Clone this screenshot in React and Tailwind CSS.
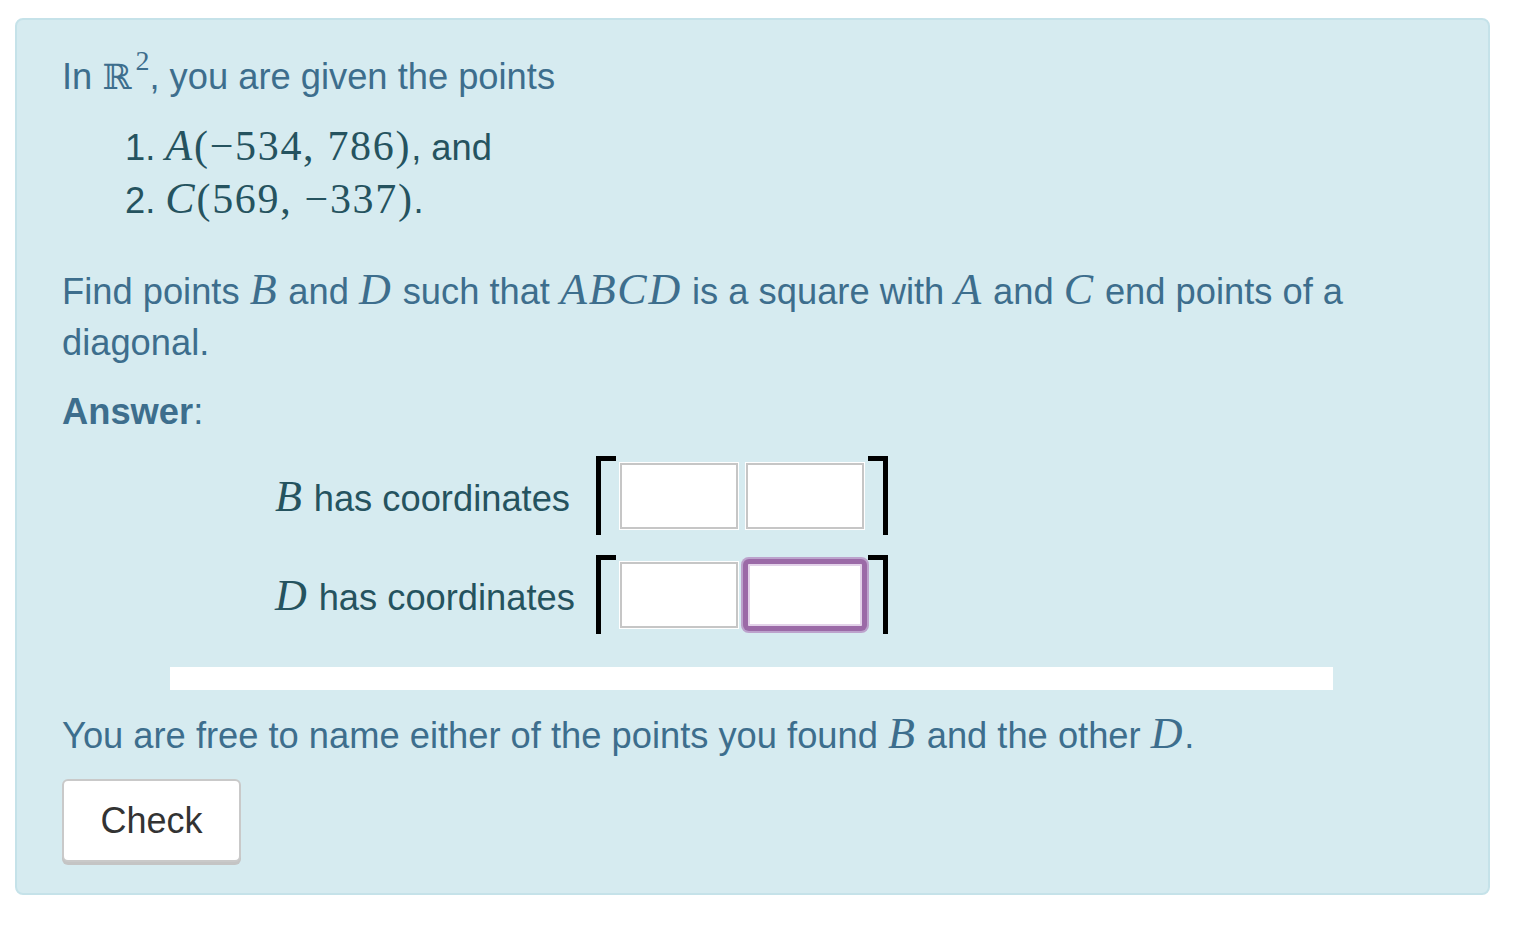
import React from "react";

const SERIF = { fontFamily: '"Liberation Serif", "DejaVu Serif", serif' };

const M = ({ children }) => (
  <span className="italic text-[44px] leading-none tracking-[0.04em]" style={SERIF}>
    {children}
  </span>
);
const N = ({ children }) => (
  <span className="text-[42px] leading-none tracking-[0.04em]" style={SERIF}>
    {children}
  </span>
);

function Bracket({ side }) {
  const left = side === "left";
  return (
    <div className={`relative w-[20px] h-[79px] ${left ? "border-l-[5px]" : "border-r-[5px]"} border-t-[5px] border-black`} />
  );
}

function Box({ focused }) {
  if (focused) {
    return (
      <div className="w-[118px] h-[66px] rounded-[3px] bg-white border-2 border-[#9b6aa7] shadow-[0_0_0_3px_#9b6aa7,0_0_0_5px_#bca2cc,inset_0_0_0_2px_#e3d2e9]" />
    );
  }
  return <div className="w-[118px] h-[66px] bg-white border-2 border-[#c6c6c6] shadow-[0_0_0_1px_#ffffff]" />;
}

function Row({ v, focused }) {
  return (
    <div className="flex items-center h-[79px]">
      <div className="w-[321px] text-[#25535f] pt-[6px]">
        <M>{v}</M> has coordinates
      </div>
      <div className="flex items-center">
        <Bracket side="left" />
        <div className="flex gap-[8px] items-center ml-[4px] relative z-10">
          <Box />
          <Box focused={focused} />
        </div>
        <div className="ml-[4px]">
          <Bracket side="right" />
        </div>
      </div>
    </div>
  );
}

export default function App() {
  return (
    <div className="bg-white w-[1518px] h-[942px] pt-[18px] pl-[15px]" style={{ fontFamily: '"Liberation Sans", Arial, sans-serif' }}>
      <div className="w-[1475px] bg-[#d6ebf0] border-2 border-[#c5e2e9] rounded-[8px] pt-[31px] pb-[31px] pl-[45px] pr-[45px] text-[36.3px] leading-[51px] text-[#3d6e8d]">
        <p>
          In <span style={{ fontFamily: '"DejaVu Serif", serif' }} className="text-[35px] leading-none">ℝ</span>
          <span className="text-[28px] leading-none relative -top-[19px] ml-[4px]" style={SERIF}>2</span>, you are given the points
        </p>
        <ol className="mt-[19px] pl-[63px] text-[#25535f] leading-[53px]">
          <li>1. <M>A</M><N>(−534, 786)</N>, and</li>
          <li>2. <M>C</M><N>(569, −337)</N>.</li>
        </ol>
        <p className="mt-[39px]">
          Find points <M>B</M> and <M>D</M> such that <M>ABCD</M> is a square with <M>A</M> and <M>C</M> end points of a diagonal.
        </p>
        <p className="mt-[18px]">
          <span className="font-bold">Answer</span>:
        </p>
        <div className="mt-[19px] ml-[213px] flex flex-col gap-[20px]">
          <Row v="B" />
          <Row v="D" focused />
        </div>
        <div className="mt-[33px] ml-[108px] w-[1163px] h-[23px] bg-white" />
        <p className="mt-[20px]">
          You are free to name either of the points you found <M>B</M> and the other <M>D</M>.
        </p>
        <button className="mt-[18px] w-[179px] h-[83px] bg-white border-2 border-[#c9c9c9] rounded-[6px] shadow-[0_3px_0_#c4c4c4] text-[#333] text-[36px]">
          Check
        </button>
      </div>
    </div>
  );
}
